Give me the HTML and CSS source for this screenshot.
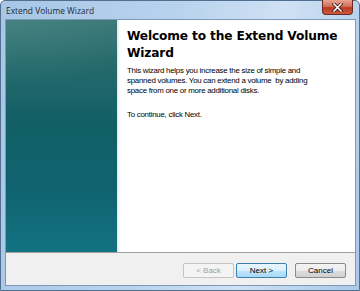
FILE: index.html
```html
<!DOCTYPE html>
<html lang="en">
<head>
    <meta charset="UTF-8">
    <title>Extend Volume Wizard</title>
    <link rel="stylesheet" href="styles.css">
</head>
<body>

    <!-- Wizard window -->
    <div class="window">
        <div class="titlebar">
            <span class="title">Extend Volume Wizard</span>
            <div class="close-btn">
                <svg width="11" height="9" viewBox="0 0 11 9">
                    <path d="M2 1 L9 8 M9 1 L2 8" stroke="#3a1a14" stroke-width="3.2" stroke-linecap="square"/>
                    <path d="M2 1 L9 8 M9 1 L2 8" stroke="#ffffff" stroke-width="1.6" stroke-linecap="square"/>
                </svg>
            </div>
        </div>

        <div class="client">
            <div class="main">
                <div class="side"></div>
                <div class="content">
                    <h1>Welcome to the Extend Volume Wizard</h1>
                    <p>This wizard helps you increase the size of simple and<br>spanned volumes. You can extend a volume&nbsp; by adding<br>space from one or more additional disks.</p>
                    <p>To continue, click Next.</p>
                </div>
            </div>
            <div class="footer">
                <button class="btn" disabled>&lt; Back</button>
                <button class="btn default">Next &gt;</button>
                <button class="btn cancel">Cancel</button>
            </div>
        </div>
    </div>

</body>
</html>
```

FILE: styles.css
```css
body {
    margin: 0;
    font-family: 'Liberation Sans', Arial, sans-serif;
}

.window {
    width: 360px;
    height: 291px;
    box-sizing: border-box;
    display: flex;
    flex-direction: column;
    border: 1px solid #51708f;
    border-radius: 5px 5px 0 0;
    background: linear-gradient(100deg, #a7c6e6 0%, #b9d3ee 45%, #cfe1f4 70%, #a9c8e8 100%);
}

.titlebar {
    height: 18px;
    display: flex;
    align-items: center;
    padding-left: 5px;
}

.title {
    font-family: 'Open Sans', sans-serif;
    font-size: 8.4px;
    color: #1e2833;
    padding-top: 1px;
}

.close-btn {
    margin-left: auto;
    margin-right: 6px;
    align-self: flex-start;
    margin-top: -1px;
    width: 31px;
    height: 15px;
    box-sizing: border-box;
    border: 1px solid #6e2a22;
    border-top: none;
    border-radius: 0 0 4px 4px;
    background: linear-gradient(to bottom, #e8a493 0%, #d4705c 45%, #bb3a22 55%, #cc5a3c 100%);
    display: flex;
    align-items: center;
    justify-content: center;
}

.client {
    flex: 1;
    margin: 0 3px 4px 4px;
    border: 1px solid #7c99b8;
    background: #f0f0f0;
    display: flex;
    flex-direction: column;
}

.main {
    flex: 1;
    display: flex;
    background: #fff;
    border-bottom: 1px solid #a0a0a0;
}

.side {
    width: 111px;
    background:
        radial-gradient(ellipse 200px 90px at 0px 0px, rgba(90, 150, 148, 0.35), rgba(90, 150, 148, 0) 75%),
        linear-gradient(to bottom, #3b7777 0%, #266a6c 18%, #125f66 45%, #0f6470 75%, #137282 100%);
}

.content {
    flex: 1;
    padding: 8px 10px 0 10px;
    color: #000;
    box-shadow: inset 3px 0 3px -2px rgba(0, 0, 0, 0.15);
}

h1 {
    font-family: 'DejaVu Sans', Verdana, sans-serif;
    font-weight: bold;
    font-size: 12.2px;
    line-height: 17px;
    margin: 0 0 4px 0;
    letter-spacing: -0.15px;
}

p {
    font-size: 7.9px;
    letter-spacing: -0.25px;
    line-height: 10px;
    margin: 0 0 14px 0;
    white-space: nowrap;
}

.footer {
    height: 32px;
    display: flex;
    align-items: flex-start;
    justify-content: flex-end;
    padding: 10px 9px 0 0;
    box-sizing: border-box;
    gap: 2px;
}

.btn {
    width: 51px;
    height: 15px;
    padding: 0;
    font-family: 'Liberation Sans', Arial, sans-serif;
    font-size: 8px;
    color: #000;
    border: 1px solid #8a8a8a;
    border-radius: 2px;
    background: linear-gradient(to bottom, #f4f4f4 0%, #ececec 50%, #dddddd 51%, #d0d0d0 100%);
}

.btn:disabled {
    color: #a0a0a0;
    border-color: #c4c4c4;
    background: #f4f4f4;
}

.btn.default {
    border-color: #3c7fb1;
    background: linear-gradient(to bottom, #eaf6fd 0%, #d9f0fc 50%, #bee6fd 51%, #a7d9f5 100%);
}

.btn.cancel {
    margin-left: 6px;
}
```
